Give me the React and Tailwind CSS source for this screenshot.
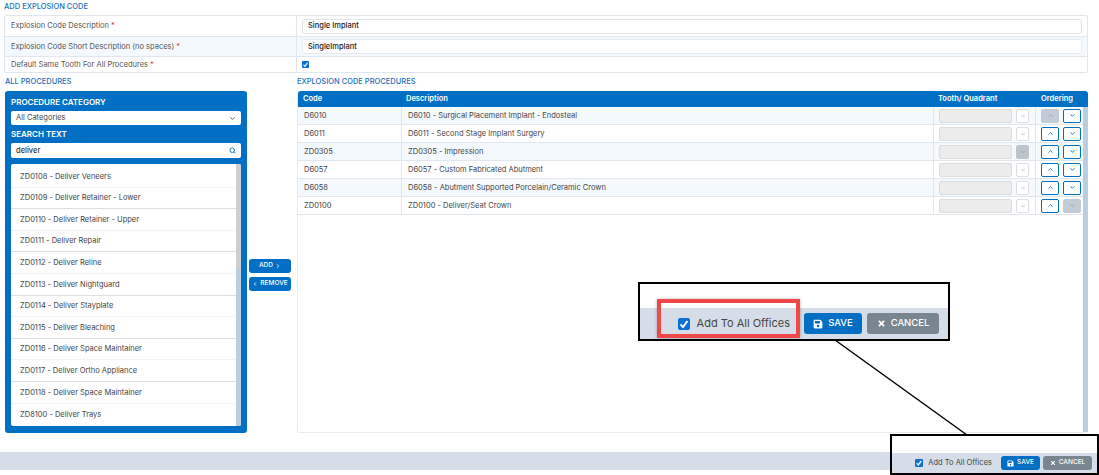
import { ChevronDown, ChevronLeft, ChevronRight, ChevronUp, Search } from "lucide-react";
import { FaSave, FaTimes } from "react-icons/fa";

const FONT = "font-['Inter','Open_Sans',sans-serif]";

const PROCEDURES = [
  "ZD0108 - Deliver Veneers",
  "ZD0109 - Deliver Retainer - Lower",
  "ZD0110 - Deliver Retainer - Upper",
  "ZD0111 - Deliver Repair",
  "ZD0112 - Deliver Reline",
  "ZD0113 - Deliver Nightguard",
  "ZD0114 - Deliver Stayplate",
  "ZD0115 - Deliver Bleaching",
  "ZD0116 - Deliver Space Maintainer",
  "ZD0117 - Deliver Ortho Appliance",
  "ZD0118 - Deliver Space Maintainer",
  "ZD8100 - Deliver Trays",
];

const ROWS = [
  { code: "D6010", desc: "D6010 - Surgical Placement Implant - Endosteal", upOff: true },
  { code: "D6011", desc: "D6011 - Second Stage Implant Surgery" },
  { code: "ZD0305", desc: "ZD0305 - Impression", toothOn: true },
  { code: "D6057", desc: "D6057 - Custom Fabricated Abutment" },
  { code: "D6058", desc: "D6058 - Abutment Supported Porcelain/Ceramic Crown" },
  { code: "ZD0100", desc: "ZD0100 - Deliver/Seat Crown", downOff: true },
];

function Check({ className }) {
  return (
    <span className={`flex items-center justify-center rounded-[1px] bg-[#0b6fd8] text-white ${className}`}>
      <svg viewBox="0 0 12 12" className="h-full w-full" fill="none" stroke="currentColor" strokeWidth="2">
        <path d="M2.5 6.5 5 9l4.5-6" />
      </svg>
    </span>
  );
}

function OrderBtn({ off, children }) {
  return (
    <span
      className={`flex h-[14px] w-[18px] items-center justify-center rounded-[2px] border ${
        off ? "border-[#c3ccd4] bg-[#c3ccd4] text-[#7fa6c8]" : "border-[#0170c4] bg-white text-[#0170c4]"
      }`}
    >
      {children}
    </span>
  );
}

function Actions({ big }) {
  return (
    <div className={`flex items-center ${big ? "gap-[5px]" : "gap-[3px]"}`}>
      <span className={`flex items-center justify-center rounded-[3px] bg-[#0170c4] font-medium text-white ${big ? "h-[21px] w-[58px] gap-[5px] text-[9.5px]" : "h-[14px] w-[39px] gap-[3px] text-[6.5px]"}`}>
        <FaSave className={big ? "h-[10px] w-[10px]" : "h-[7px] w-[7px]"} />
        SAVE
      </span>
      <span className={`flex items-center justify-center rounded-[3px] bg-[#78868f] font-medium text-white ${big ? "h-[21px] w-[72px] gap-[5px] text-[9.5px]" : "h-[14px] w-[49px] gap-[3px] text-[6.5px]"}`}>
        <FaTimes className={big ? "h-[9px] w-[9px]" : "h-[6px] w-[6px]"} />
        CANCEL
      </span>
    </div>
  );
}

function FormRow({ label, tint, height, children }) {
  return (
    <div className={`flex border-b border-[#dfe6ee] last:border-b-0 ${height} ${tint ? "bg-[#f4f9fd]" : ""}`}>
      <div className="flex w-[292px] shrink-0 items-center border-r border-[#dfe6ee] pl-[6px] text-[7.5px] text-[#555]">
        {label} <span className="ml-[2px] text-[#e03131]">*</span>
      </div>
      <div className="flex flex-1 items-center pl-[5px] pr-[5px]">{children}</div>
    </div>
  );
}

export default function App() {
  return (
    <div className={`relative flex h-[475px] w-[1099px] flex-col overflow-hidden bg-white ${FONT}`}>
      <div className="flex-1 pl-[4px] pr-[11px]">
        <h2 className="flex h-[15px] items-center pb-[1px] text-[7.5px] font-medium text-[#1c6fba]">ADD EXPLOSION CODE</h2>

        <div className="rounded-[2px] border border-[#dfe6ee]">
          <FormRow label="Explosion Code Description" height="h-[21px]">
            <div className="flex h-[15px] w-full items-center rounded-[3px] border border-[#dfe3e6] pl-[5px] text-[7.5px] font-medium text-[#222]">Single Implant</div>
          </FormRow>
          <FormRow label="Explosion Code Short Description (no spaces)" tint height="h-[20px]">
            <div className="flex h-[15px] w-full items-center rounded-[3px] border border-[#e6eaee] bg-white pl-[5px] text-[7.5px] font-medium text-[#222]">SingleImplant</div>
          </FormRow>
          <FormRow label="Default Same Tooth For All Procedures" height="h-[15px]">
            <Check className="h-[7px] w-[7px]" />
          </FormRow>
        </div>

        <div className="flex">
          {/* All procedures */}
          <div className="w-[243px] pl-[1px]">
            <h3 className="flex h-[18px] items-center text-[7.5px] font-medium text-[#1c6fba]">ALL PROCEDURES</h3>
            <div className="h-[342px] rounded-[3px] bg-[#0170c4] px-[6px] pt-[6px]">
              <p className="text-[8px] font-semibold leading-[10px] text-white">PROCEDURE CATEGORY</p>
              <div className="mt-[4px] flex h-[14px] items-center justify-between rounded-[2px] bg-white px-[5px] text-[7.5px] text-[#444]">
                All Categories
                <ChevronDown className="h-[7px] w-[7px]" strokeWidth={3} />
              </div>
              <p className="mt-[4px] text-[8px] font-semibold leading-[10px] text-white">SEARCH TEXT</p>
              <div className="mt-[4px] flex h-[15px] items-center justify-between rounded-[2px] bg-white px-[5px] text-[7.5px] font-medium text-[#333]">
                deliver
                <Search className="h-[7px] w-[7px] text-[#0170c4]" strokeWidth={3} />
              </div>
              <div className="mt-[6px] flex h-[262px] overflow-hidden rounded-[2px] bg-white">
                <ul className="flex-1 pt-[2px]">
                  {PROCEDURES.map((p, i) => (
                    <li
                      key={i}
                      className={`flex h-[21.6px] items-center border-b pl-[9px] text-[7.5px] text-[#444] ${i % 2 ? "border-[#dcdfe2]" : "border-[#f2f3f4]"} last:border-b-0`}
                    >
                      {p}
                    </li>
                  ))}
                </ul>
                <div className="flex w-[5px] flex-col bg-[#cfcfcf]">
                  <div className="mt-[105px] flex-1 rounded-[2px] bg-[#b9cfe0]" />
                </div>
              </div>
            </div>
          </div>

          {/* Add / remove */}
          <div className="flex w-[50px] flex-col items-start gap-[4px] pl-[2px] pt-[186px]">
            <span className="flex h-[14px] w-[42px] items-center justify-center gap-[2px] rounded-[3px] bg-[#0170c4] text-[6.5px] font-medium text-white">
              ADD <ChevronRight className="h-[6px] w-[6px]" strokeWidth={3} />
            </span>
            <span className="flex h-[14px] w-[42px] items-center justify-center gap-[2px] rounded-[3px] bg-[#0170c4] text-[6.5px] font-medium text-white">
              <ChevronLeft className="h-[6px] w-[6px]" strokeWidth={3} /> REMOVE
            </span>
          </div>

          {/* Explosion code procedures */}
          <div className="flex-1">
            <h3 className="flex h-[18px] items-center text-[7.5px] font-medium text-[#1c6fba]">EXPLOSION CODE PROCEDURES</h3>
            <div className="flex h-[342px] flex-col rounded-[3px] border-b border-l border-[#e8ebee]">
              <div className="flex h-[16px] items-center rounded-t-[3px] bg-[#0170c4] text-[7.5px] font-semibold text-white">
                <span className="w-[104px] pl-[5px]">Code</span>
                <span className="w-[532px] pl-[4px]">Description</span>
                <span className="w-[102px] pl-[4px]">Tooth/ Quadrant</span>
                <span className="pl-[5px]">Ordering</span>
              </div>
              <div className="flex flex-1">
                <div className="flex-1">
                  {ROWS.map((r, i) => (
                    <div key={r.code} className={`flex h-[18px] border-b border-[#dfe6ee] text-[7.5px] text-[#444] ${i % 2 ? "" : "bg-[#f4f9fd]"}`}>
                      <div className="flex w-[104px] items-center border-r border-[#dfe6ee] pl-[6px]">{r.code}</div>
                      <div className="flex w-[532px] items-center border-r border-[#dfe6ee] pl-[6px]">{r.desc}</div>
                      <div className="flex w-[102px] items-center gap-[4px] border-r border-[#dfe6ee] pl-[5px]">
                        <span className="h-[14px] w-[73px] rounded-[2px] border border-[#dcdcdc] bg-[#ececec]" />
                        <span className={`flex h-[14px] w-[13px] items-center justify-center rounded-[2px] border ${r.toothOn ? "border-[#bcc4cc] bg-[#bcc4cc]" : "border-[#dcdfe2] bg-white"} text-[#8aa9c9]`}>
                          <ChevronDown className="h-[6px] w-[6px]" strokeWidth={2.5} />
                        </span>
                      </div>
                      <div className="flex flex-1 items-center gap-[4px] pl-[5px]">
                        <OrderBtn off={r.upOff}><ChevronUp className="h-[7px] w-[7px]" strokeWidth={3} /></OrderBtn>
                        <OrderBtn off={r.downOff}><ChevronDown className="h-[7px] w-[7px]" strokeWidth={3} /></OrderBtn>
                      </div>
                    </div>
                  ))}
                </div>
                <div className="w-[5px] bg-[#b9cfe0]" />
              </div>
            </div>
          </div>
        </div>
      </div>

      <div className="mb-[5px] h-[18px] bg-[#d5dee8]" />

      {/* Callouts drawn over the page */}
      <svg className="pointer-events-none absolute inset-0 h-full w-full" viewBox="0 0 1099 475">
        <line x1="835" y1="340" x2="967" y2="435" stroke="#000" strokeWidth="1.5" />
      </svg>

      <div className="absolute left-[638px] top-[282px] flex h-[59px] w-[312px] flex-col border-2 border-black bg-white">
        <div className="flex-1" />
        <div className="flex h-[31px] items-center justify-end gap-[4px] bg-[#d5dee8] pr-[9px]">
          <label className="flex items-center gap-[7px] pr-[10px] text-[11px] text-[#444]">
            <Check className="h-[12px] w-[12px] rounded-[2px]" />
            Add To All Offices
          </label>
          <Actions big />
        </div>
      </div>
      <div className="absolute left-[657px] top-[299px] h-[39px] w-[143px] border-[4px] border-[#f04848] shadow-[0_0_3px_rgba(0,0,0,0.3)]" />

      <div className="absolute left-[890px] top-[434px] flex h-[41px] w-[209px] flex-col border-2 border-black bg-white">
        <div className="flex-1" />
        <div className="flex h-[20px] items-center justify-end gap-[9px] bg-[#d5dee8] pr-[5px]">
          <label className="flex items-center gap-[5px] text-[7.5px] text-[#444]">
            <Check className="h-[8px] w-[8px]" />
            Add To All Offices
          </label>
          <Actions />
        </div>
      </div>
    </div>
  );
}
